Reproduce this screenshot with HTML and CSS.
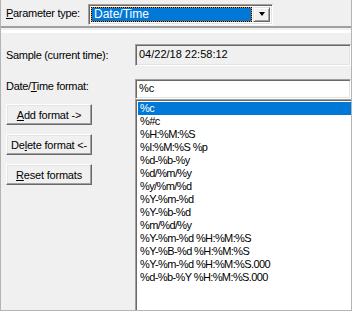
FILE: index.html
```html
<!DOCTYPE html>
<html lang="en">
<head>
    <meta charset="UTF-8">
    <title>Parameter type</title>
    <link rel="stylesheet" href="styles.css">
</head>
<body>
    <div class="window">
        <div class="toolbar">
            <span class="label"><u>P</u>arameter type:</span>
            <div class="combo">
                <div class="combo-value"><span class="focus">Date/Time</span></div>
                <div class="combo-button"><span class="arrow"></span></div>
            </div>
        </div>
        <div class="separator"></div>
        <div class="form">
            <div class="row sample-row">
                <div class="label">Sample (current time):</div>
                <div class="field readonly">04/22/18 22:58:12</div>
            </div>
            <div class="row format-row">
                <div class="label">Date/<u>T</u>ime format:</div>
                <div class="field edit">%c</div>
            </div>
            <div class="row main-row">
                <div class="buttons">
                    <button type="button"><u>A</u>dd format -&gt;</button>
                    <button type="button">De<u>l</u>ete format &lt;-</button>
                    <button type="button"><u>R</u>eset formats</button>
                </div>
                <ul class="list">
                    <li class="selected">%c</li>
                    <li>%#c</li>
                    <li>%H:%M:%S</li>
                    <li>%I:%M:%S %p</li>
                    <li>%d-%b-%y</li>
                    <li>%d/%m/%y</li>
                    <li>%y/%m/%d</li>
                    <li>%Y-%m-%d</li>
                    <li>%Y-%b-%d</li>
                    <li>%m/%d/%y</li>
                    <li>%Y-%m-%d %H:%M:%S</li>
                    <li>%Y-%B-%d %H:%M:%S</li>
                    <li>%Y-%m-%d %H:%M:%S.000</li>
                    <li>%d-%b-%Y %H:%M:%S.000</li>
                </ul>
            </div>
        </div>
    </div>
</body>
</html>
```

FILE: styles.css
```css
body {
    margin: 0;
    padding: 0;
    font-family: "Liberation Sans", Arial, sans-serif;
    font-size: 11px;
    color: #000;
    background: #f0f0f0;
}
u {
    text-decoration-thickness: 1px;
    text-underline-offset: 1px;
}
.label {
    letter-spacing: -0.3px;
}
.window {
    width: 352px;
    height: 311px;
    box-sizing: border-box;
    border: 1px solid #b4b4b4;
    border-top: none;
    background: #f0f0f0;
    overflow: hidden;
}
.toolbar {
    height: 26px;
    display: flex;
    align-items: center;
    padding-left: 5px;
}
.toolbar .label {
    width: 82px;
}
.combo {
    width: 185px;
    height: 21px;
    box-sizing: border-box;
    display: flex;
    border: 1px solid;
    border-color: #a0a0a0 #fff #fff #a0a0a0;
    box-shadow: inset 1px 1px #696969, inset -1px -1px #e3e3e3;
    padding: 2px;
    margin-top: 2px;
    background: #fff;
}
.combo-value {
    flex: 1;
    padding-right: 1px;
}
.focus {
    display: block;
    height: 100%;
    box-sizing: border-box;
    border: 1px dotted #000;
    background: linear-gradient(#0078d7, #0078d7) padding-box, #e58d2b border-box;
    color: #fff;
    padding-left: 2px;
    line-height: 13px;
    font-size: 12px;
}
.combo-button {
    width: 17px;
    box-sizing: border-box;
    background: #f0f0f0;
    border: 1px solid;
    border-color: #e3e3e3 #696969 #696969 #e3e3e3;
    box-shadow: inset 1px 1px #fff, inset -1px -1px #a0a0a0;
    display: flex;
    align-items: center;
    justify-content: center;
}
.arrow {
    width: 0;
    height: 0;
    border-left: 3.5px solid transparent;
    border-right: 3.5px solid transparent;
    border-top: 4px solid #000;
}
.separator {
    height: 2px;
    background: #a0a0a0;
    border-bottom: 2px solid #f0f0f0;
    box-shadow: 0 3px 0 #fff;
}
.form {
    padding-top: 14px;
}
.row {
    display: flex;
}
.row .label {
    width: 134px;
    box-sizing: border-box;
    padding-left: 5px;
    flex-shrink: 0;
}
.sample-row {
    align-items: center;
    margin-bottom: 13px;
}
.format-row .label {
    padding-top: 1px;
    line-height: 13px;
}
.field {
    flex: 1;
    box-sizing: border-box;
    border: 1px solid;
    border-color: #a0a0a0 #fff #fff #a0a0a0;
    box-shadow: inset 1px 1px #696969, inset -1px -1px #e3e3e3;
    padding-left: 3px;
}
.readonly {
    height: 22px;
    line-height: 19px;
    background: #f0f0f0;
}
.edit {
    height: 20px;
    line-height: 17px;
    background: #fff;
}
.buttons {
    width: 134px;
    flex-shrink: 0;
    display: flex;
    flex-direction: column;
    align-items: flex-start;
    gap: 9px;
    padding: 5px 0 0 5px;
    box-sizing: border-box;
}
button {
    width: 86px;
    height: 21px;
    padding: 0;
    font-family: inherit;
    font-size: 11px;
    letter-spacing: -0.2px;
    color: #000;
    background: #f0f0f0;
    border: 1px solid;
    border-color: #fff #696969 #696969 #fff;
    box-shadow: inset -1px -1px #a0a0a0, inset 1px 1px #e3e3e3;
}
.list {
    flex: 1;
    list-style-type: none;
    margin: 0;
    padding: 2px 0 0 2px;
    height: 220px;
    background: #fff;
    border-left: 1px solid #a0a0a0;
    border-top: 1px solid #a0a0a0;
    box-shadow: inset 1px 1px #696969;
}
.list li {
    height: 13px;
    line-height: 13px;
    padding-left: 2px;
    font-size: 11px;
    letter-spacing: -0.6px;
    white-space: nowrap;
}
.list li.selected {
    background-color: #0078d7;
    color: #fff;
}
```
